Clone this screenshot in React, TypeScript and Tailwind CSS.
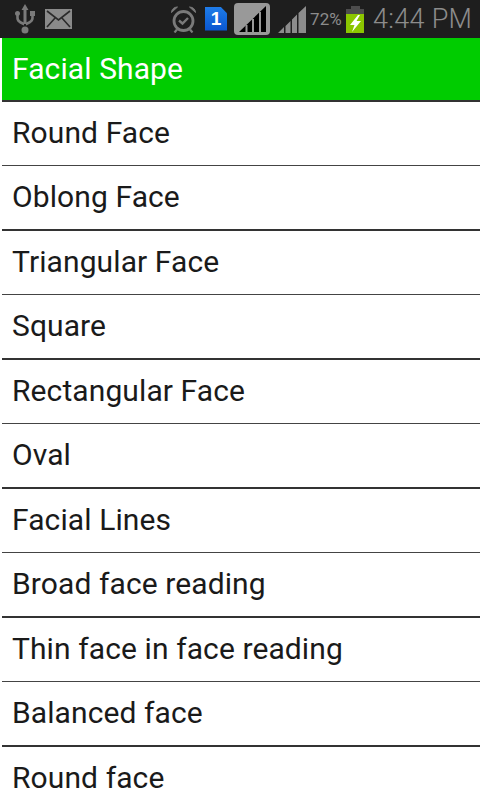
const ITEMS = [
  "Round Face",
  "Oblong Face",
  "Triangular Face",
  "Square",
  "Rectangular Face",
  "Oval",
  "Facial Lines",
  "Broad face reading",
  "Thin face in face reading",
  "Balanced face",
  "Round face",
];

function StatusBar() {
  return (
    <div className="flex h-[38px] items-center bg-[#1e1e1e] text-[#8c8c8c]">
      {/* usb */}
      <svg width="20" height="30" viewBox="0 0 20 30" className="ml-[15px]" fill="#7a7a7a">
        <path d="M10 0l3.500 6H11.500v14h-3V6H6.500z" />
        <path d="M0 9.500a2.500 2.500 0 0 1 5 0c0 1-.5 1.800-1.200 2.200V14c0 2 2 3 5.200 4.500v3C4 19.500 1.200 17.500 1.200 14v-2.300C.5 11.300 0 10.500 0 9.500z" />
        <path d="M15 7h5v5h-1.200v2c0 3.500-3 5.500-7.800 7.500v-3c3.500-1.500 5.200-2.500 5.200-4.500v-2H15z" />
        <circle cx="10" cy="26" r="3.500" />
      </svg>
      {/* mail */}
      <svg width="27" height="20" viewBox="0 0 27 20" className="ml-[10px]">
        <rect width="27" height="20" fill="#8a8a8a" />
        <path d="M2 2l11.500 9L25 2M2 18l8.500-9.500M25 18l-8.500-9.500" fill="none" stroke="#2a2a2a" strokeWidth="1.600" />
      </svg>
      <div className="flex-1" />
      {/* alarm */}
      <svg width="25" height="27" viewBox="0 0 25 27" fill="none" stroke="#7a7a7a">
        <circle cx="12.500" cy="15" r="9.500" strokeWidth="2.800" />
        <path d="M8 14.500l3.500 3 5.500-5.500" strokeWidth="2.400" />
        <path d="M0.500 6.500c0-3 2.500-5.500 6-5.500zM24.500 6.500c0-3-2.500-5.500-6-5.500z" fill="#7a7a7a" strokeWidth="1" />
        <path d="M6 23.500l-2.500 3M19 23.500l2.500 3" strokeWidth="2.200" />
      </svg>
      {/* sim */}
      <div className="ml-[9px] mt-[-1px] flex h-[24px] w-[22px] items-center justify-center bg-gradient-to-b from-[#1f7ce8] to-[#0a55d0] [clip-path:polygon(0_0,70%_0,100%_28%,100%_100%,0_100%)]">
        <span className="font-['Liberation_Sans',sans-serif] text-[19px] leading-none font-bold text-white">1</span>
      </div>
      {/* data signal box */}
      <svg width="36" height="32" viewBox="0 0 36 32" className="ml-[7px]">
        <rect width="36" height="32" rx="4" fill="#999999" />
        <path d="M5 29L32 3v26z" fill="#000000" />
        <path d="M12.500 22v8M19 16v14M26 9v21" stroke="#999999" strokeWidth="2" />
      </svg>
      {/* signal */}
      <svg width="28" height="27" viewBox="0 0 28 27" className="ml-[8px]" fill="#8c8c8c">
        <path d="M0 27l6-6v6zM7.500 27v-7l5-5v12zM14 27V13.500l5-5V27zM20.500 27V7L28 0v27z" />
      </svg>
      <span className="ml-[4px] w-[32px] font-['Roboto',sans-serif] text-[17px] leading-none whitespace-nowrap">72%</span>
      {/* battery */}
      <div className="ml-[4px] flex h-[27px] w-[18px] flex-col items-center">
        <div className="h-[3px] w-[9px] bg-[#4d4d4d]" />
        <div className="h-[5px] w-[18px] bg-[#4d4d4d]" />
        <div className="flex h-[19px] w-[18px] items-center justify-center bg-[#8cc600]">
          <svg width="12" height="17" viewBox="0 0 12 17" fill="#ffffff">
            <path d="M9 0L1 10h4.500L3 17l9-11H7.500L11 0z" />
          </svg>
        </div>
      </div>
      <span className="mr-[9px] ml-[9px] w-[98px] font-['Roboto',sans-serif] text-[27px] leading-none font-light tracking-[0.3px] whitespace-nowrap">
        4:44 PM
      </span>
    </div>
  );
}

export default function App() {
  return (
    <div className="h-[800px] w-[480px] overflow-hidden bg-white font-['Roboto',sans-serif] tracking-[0.1px]">
      <StatusBar />
      <div className="pl-[2px]">
        <div className="flex h-[62px] items-center bg-[#00cc00] pb-[2px] pl-[10px] text-[30px] text-white">
          Facial Shape
        </div>
        <div className="h-[2px] bg-[#333333]" />
        {ITEMS.map((item, i) => (
          <div key={item}>
            <div className="flex h-[63px] items-center pb-[2px] pl-[10px] text-[30px] text-[#1a1a1a]">
              {item}
            </div>
            <div className={i % 2 === 0 ? "h-px bg-[#444444]" : "h-[2px] bg-[#333333]"} />
          </div>
        ))}
      </div>
    </div>
  );
}
